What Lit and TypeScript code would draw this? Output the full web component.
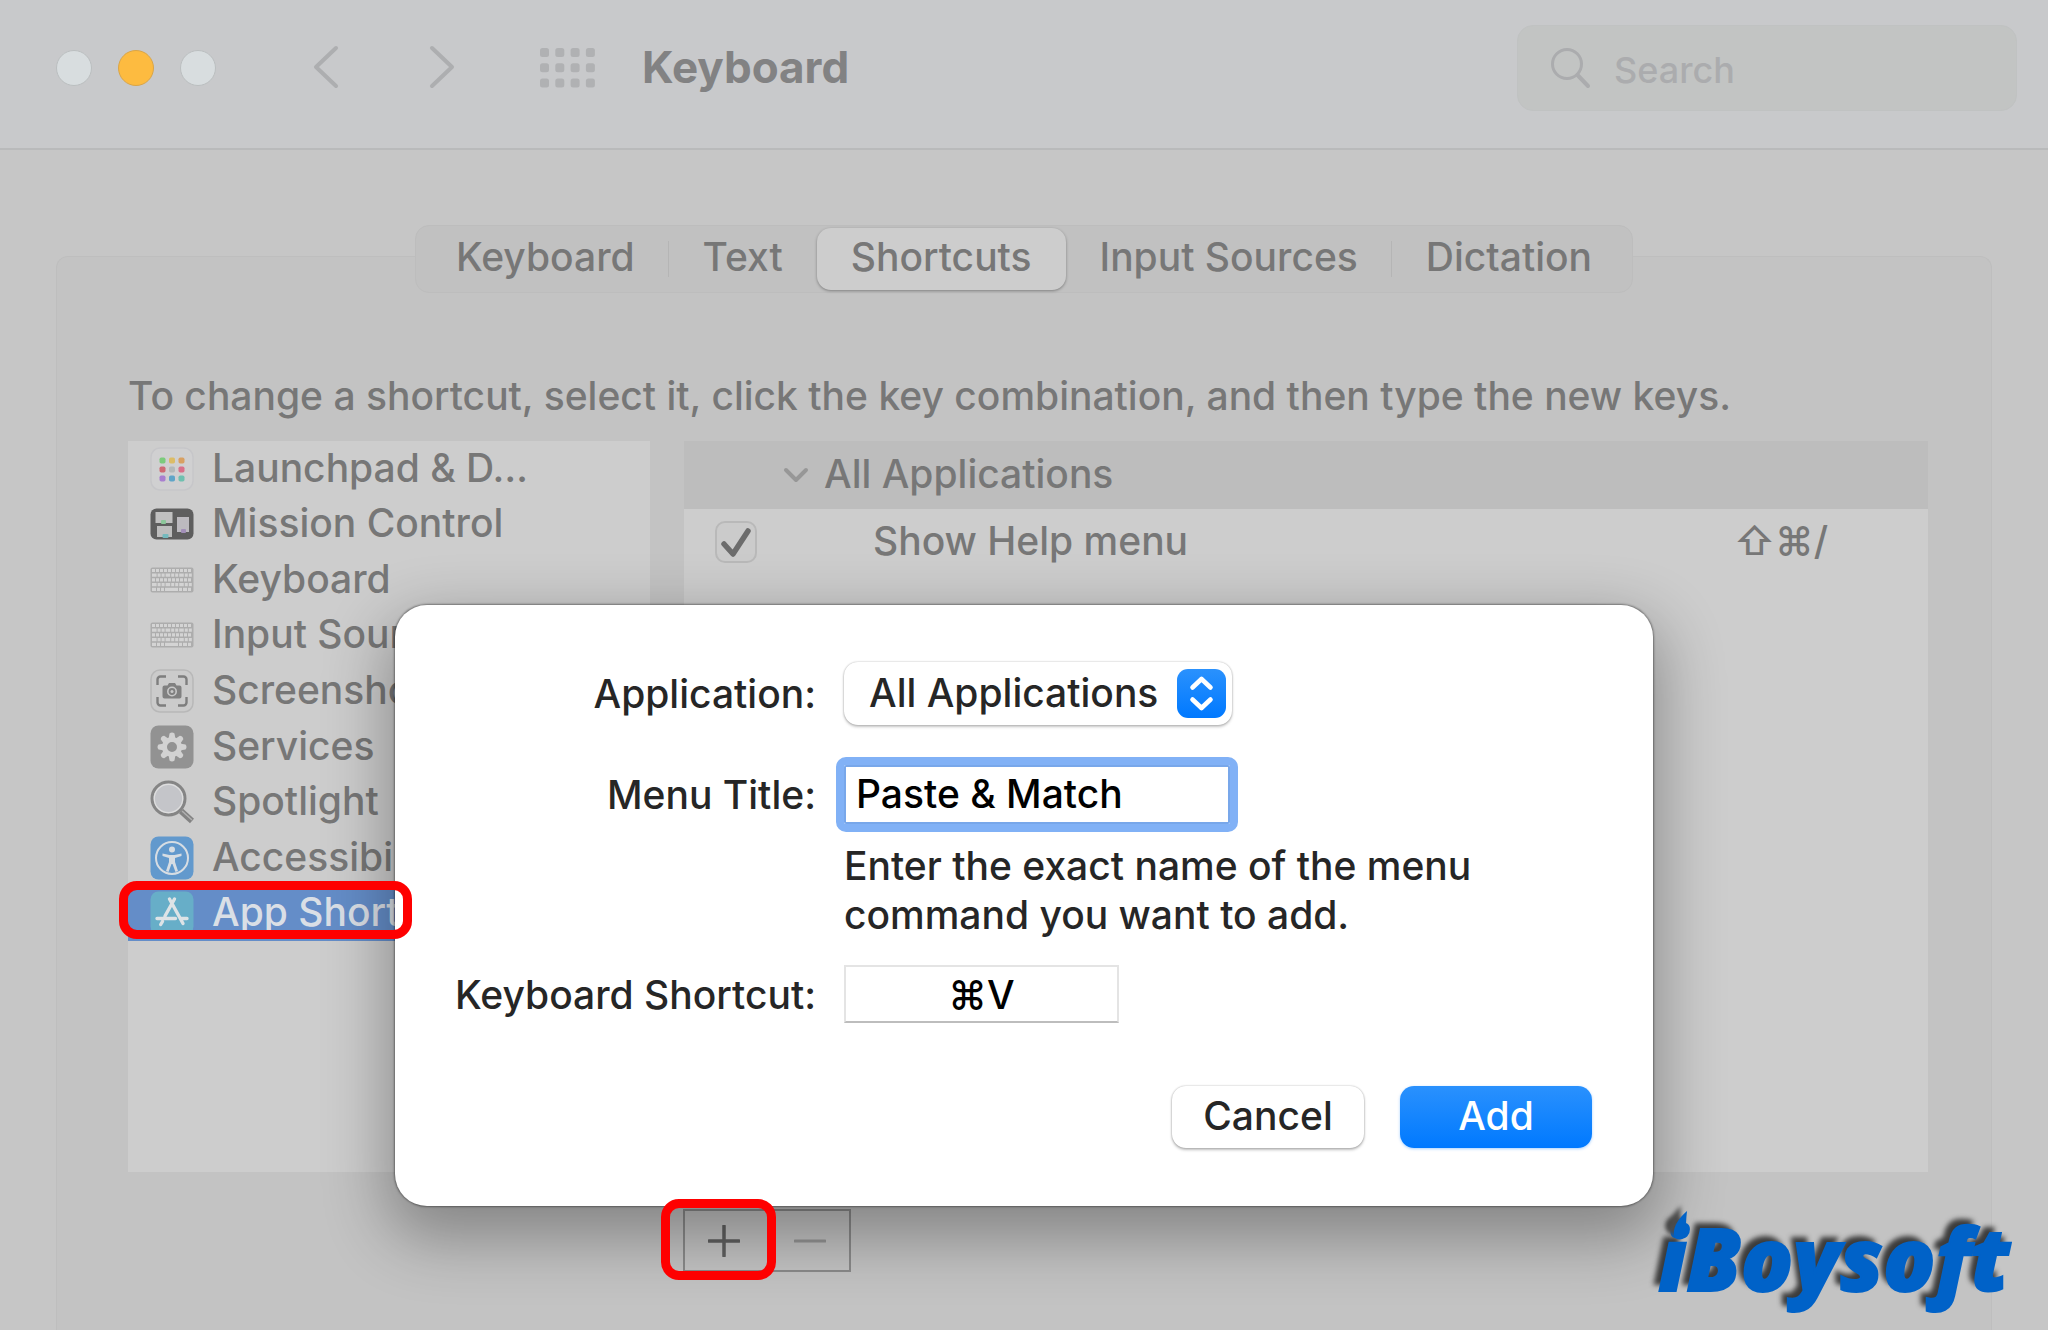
import { LitElement, html, css, svg } from "lit";
import { customElement, state } from "lit/decorators.js";
import { classMap } from "lit/directives/class-map.js";

const keyRows = [0, 1, 2, 3, 4].map((r) => {
  const y = 12.5 + r * 4.7;
  const dash = r === 4 ? "4 1 3 1 3 1 13 1 3 1" : r % 2 ? "4.6 1 3 1 3 1" : "3 1 3 1 3 1";
  return svg`<path d="M2 ${y}H42" stroke="#d4d4d4" stroke-width="3.200" stroke-dasharray=${dash}/>`;
});

const keyboardIcon = svg`
  <rect x="0.5" y="9.5" width="43" height="25" rx="2" fill="#adadad"/>
  ${keyRows}`;

const launchpadColors = ["#7ccb7c", "#dcbc66", "#d8a062", "#cf6a74", "#b4b9b9", "#d9708a", "#a97fd0", "#5fa5c8", "#6fc0b0"];

const icons: Record<string, unknown> = {
  launchpad: svg`
    <rect x="1" y="1" width="42" height="42" rx="9" fill="#d0d0d1" stroke="#c6c6c9" stroke-width="1.5"/>
    ${launchpadColors.map((c, i) => svg`<rect x=${9.5 + (i % 3) * 9.5} y=${10.5 + Math.floor(i / 3) * 9} width="6" height="6" rx="1.8" fill=${c}/>`)}`,
  mission: svg`
    <rect x="0.5" y="6.500" width="43" height="31" rx="6" fill="#5e5e5e"/>
    <rect x="5.500" y="10" width="17" height="11" fill="#c0c0c0"/>
    <rect x="7" y="24" width="15" height="11" fill="#bdbdbd"/>
    <rect x="27" y="15" width="12" height="15" fill="#bcbabf"/>
    <rect x="11" y="18" width="5" height="4" rx="1" fill="#8cc79a"/>
    <rect x="12.500" y="32" width="6" height="4" rx="1" fill="#74b9bd"/>
    <rect x="31" y="27" width="5" height="4" rx="1" fill="#a28fb8"/>`,
  keyboard: keyboardIcon,
  screenshot: svg`
    <rect x="1" y="1" width="42" height="42" rx="9" fill="#cbcbcb" stroke="#b8b8b8" stroke-width="1.5"/>
    <path d="M7.500 16V10.500a3 3 0 0 1 3-3H16M28 7.500h5.500a3 3 0 0 1 3 3V16M36.500 28v5.500a3 3 0 0 1-3 3H28M16 36.500h-5.500a3 3 0 0 1-3-3V28" fill="none" stroke="#7e7e7e" stroke-width="2.400"/>
    <path d="M14.500 16.500h3l1.500-2.500h6l1.500 2.500h3a2 2 0 0 1 2 2v9a2 2 0 0 1-2 2h-15a2 2 0 0 1-2-2v-9a2 2 0 0 1 2-2z" fill="#808080"/>
    <circle cx="22" cy="22.500" r="4.200" fill="#808080" stroke="#c8c8c8" stroke-width="1.600"/>
    <circle cx="22" cy="22.500" r="1.500" fill="#c8c8c8"/>`,
  services: svg`
    <rect x="0.500" y="0.500" width="43" height="43" rx="8" fill="#929292"/>
    ${[0, 45, 90, 135, 180, 225, 270, 315].map((a) => svg`<path d="M19.500 8.500q2.500-2 5 0l1 6h-7z" fill="#d2d2d2" transform="rotate(${a} 22 22)"/>`)}
    <circle cx="22" cy="22" r="7.500" fill="none" stroke="#d2d2d2" stroke-width="5"/>`,
  spotlight: svg`
    <path d="M31 31L42 41" stroke="#828282" stroke-width="6"/>
    <path d="M32 31L42 40" stroke="#b0b0b0" stroke-width="1.500"/>
    <circle cx="18.500" cy="18.500" r="16.500" fill="#c4c5c9" stroke="#858585" stroke-width="3"/>
    <circle cx="18.500" cy="18.500" r="14.200" fill="none" stroke="#dedede" stroke-width="1.200"/>`,
  accessibility: svg`
    <rect x="0.500" y="0.500" width="43" height="43" rx="8" fill="#6299cd"/>
    <circle cx="22" cy="22" r="16" fill="none" stroke="#d7dde3" stroke-width="2"/>
    <circle cx="22" cy="13.500" r="3" fill="#d7dde3"/>
    <path d="M12.500 17.500l7 1.500h5l7-1.500v2.500l-6.500 2v4l3 9-2.500 1-3-8h-1l-3 8-2.500-1 3-9v-4l-6.500-2z" fill="#d7dde3"/>`,
  appstore: svg`
    <rect x="0.500" y="0.500" width="43" height="43" rx="8" fill="#67aec8"/>
    <path d="M24.500 8L15 25M19.500 8l13.500 24.500M7 27.500h18.500M31.500 27.500H37M12.500 30.500l-1.800 3" fill="none" stroke="#dde3e6" stroke-width="3.400" stroke-linecap="round"/>`,
};

interface Category {
  name: string;
  icon: string;
}

const categories: Category[] = [
  { name: "Launchpad & D…", icon: "launchpad" },
  { name: "Mission Control", icon: "mission" },
  { name: "Keyboard", icon: "keyboard" },
  { name: "Input Sources", icon: "keyboard" },
  { name: "Screenshots", icon: "screenshot" },
  { name: "Services", icon: "services" },
  { name: "Spotlight", icon: "spotlight" },
  { name: "Accessibility", icon: "accessibility" },
  { name: "App Shortcuts", icon: "appstore" },
];

const tabs = ["Keyboard", "Text", "Shortcuts", "Input Sources", "Dictation"];

@customElement("prefs-toolbar")
class PrefsToolbar extends LitElement {
  static styles = css`
    :host { display: block; }
    .bar {
      box-sizing: border-box;
      height: 150px;
      padding: 0 31px 12px 56px;
      display: flex;
      align-items: center;
      background: #c8c9cb;
      border-bottom: 2px solid #b9babb;
    }
    button { border: 0; padding: 0; background: none; display: block; }
    svg { display: block; }
    .lights { display: flex; gap: 26px; margin-right: 96px; }
    .light { width: 36px; height: 36px; border-radius: 50%; background: #d8dddf; border: 1px solid #bbbfc0; }
    .minimize { background: #fdbb40; border-color: #d9a548; }
    .history { display: flex; gap: 88px; margin: 0 84px 2px 0; }
    .title { margin: 0 auto 0 46px; padding-bottom: 2px; font-size: 44px; line-height: 52px; font-weight: 650; color: #828283; }
    .search {
      box-sizing: border-box;
      width: 500px;
      height: 86px;
      padding: 2px 32px 0;
      display: flex;
      align-items: center;
      gap: 22px;
      border-radius: 16px;
      background: #c2c4c3;
      border: 1px solid #c0c2c2;
    }
    .field { flex: 1; min-width: 0; border: 0; padding: 2px 0 0; background: none; outline: 0; font: inherit; font-size: 36px; color: #7f7f80; }
    .field::placeholder { color: #abacae; opacity: 1; }
  `;

  render() {
    return html`
      <header class="bar">
        <div class="lights">
          <button class="light" aria-label="Close"></button>
          <button class="light minimize" aria-label="Minimize"></button>
          <button class="light" aria-label="Zoom"></button>
        </div>
        <div class="history">
          <button aria-label="Back">
            <svg width="28" height="46" viewBox="0 0 28 46"><path d="M24 4L4 23l20 19" fill="none" stroke="#adaeb0" stroke-width="4" stroke-linecap="round" stroke-linejoin="round"/></svg>
          </button>
          <button aria-label="Forward">
            <svg width="28" height="46" viewBox="0 0 28 46"><path d="M4 4l20 19L4 42" fill="none" stroke="#adaeb0" stroke-width="4" stroke-linecap="round" stroke-linejoin="round"/></svg>
          </button>
        </div>
        <button aria-label="Show All">
          <svg width="56" height="42" viewBox="0 0 56 42">
            ${[0, 1, 2].map((r) => [0, 1, 2, 3].map((c) => svg`<rect x=${c * 15.300} y=${1 + r * 15.300} width="9" height="9" rx="2.500" fill="#b0b1b3"/>`))}
          </svg>
        </button>
        <h1 class="title">Keyboard</h1>
        <label class="search">
          <svg width="42" height="42" viewBox="0 0 42 42"><circle cx="17" cy="16" r="14.500" fill="none" stroke="#abacae" stroke-width="3"/><path d="M27.500 27L38 38" stroke="#abacae" stroke-width="4" stroke-linecap="round"/></svg>
          <input class="field" type="text" placeholder="Search" aria-label="Search" />
        </label>
      </header>
    `;
  }
}

@customElement("shortcut-sheet")
class ShortcutSheet extends LitElement {
  static styles = css`
    :host { display: block; }
    .sheet {
      box-sizing: border-box;
      padding: 57px 61px 58px 60px;
      background: #fff;
      border-radius: 32px;
      box-shadow: 0 0 2px 1px rgba(0, 0, 0, 0.38), 0 24px 64px 8px rgba(0, 0, 0, 0.32);
      color: #262626;
      line-height: 49px;
    }
    .form { display: grid; grid-template-columns: 361px 1fr; column-gap: 28px; align-items: center; justify-items: start; }
    .label { justify-self: end; white-space: nowrap; }
    .popup { display: grid; align-items: center; width: 388px; height: 63px; margin-bottom: 40px; }
    .popup > * { grid-area: 1 / 1; }
    .first { margin-bottom: 40px; }
    .select {
      appearance: none;
      box-sizing: border-box;
      width: 100%;
      height: 100%;
      margin: 0;
      padding: 0 70px 2px 25px;
      border: 0;
      border-radius: 14px;
      background: #fff;
      box-shadow: 0 0 2px rgba(0, 0, 0, 0.3), 0 2px 3px rgba(0, 0, 0, 0.22);
      font: inherit;
      color: inherit;
    }
    .arrows { justify-self: end; margin-right: 6px; pointer-events: none; }
    .text {
      box-sizing: border-box;
      width: 386px;
      height: 59px;
      padding: 0 10px 2px;
      border: 2px solid #78a7ea;
      border-radius: 2px;
      outline: 8px solid #81b1f6;
      font: inherit;
      color: #000;
      background: #fff;
    }
    .hint { grid-column: 2; margin: 17px 0 26px; max-width: 660px; }
    .keys {
      box-sizing: border-box;
      width: 275px;
      height: 58px;
      padding: 0;
      border: 2px solid #e4e4e4;
      border-bottom-color: #bdbdbd;
      background: #fff;
      font: inherit;
      color: #000;
      text-align: center;
    }
    .actions { display: flex; justify-content: flex-end; gap: 36px; margin-top: 63px; }
    .button {
      width: 192px;
      height: 62px;
      padding: 0 0 4px;
      border: 0;
      border-radius: 14px;
      background: #fff;
      box-shadow: 0 0 2px rgba(0, 0, 0, 0.3), 0 2px 3px rgba(0, 0, 0, 0.25);
      font: inherit;
      color: inherit;
    }
    .primary { color: #fff; background: linear-gradient(#2a91fd, #0079ff); box-shadow: 0 1px 3px rgba(0, 122, 255, 0.35); }
  `;

  render() {
    return html`
      <form class="sheet" role="dialog" aria-label="Add shortcut" @submit=${(e: Event) => e.preventDefault()}>
        <div class="form">
          <label class="label first" for="application">Application:</label>
          <div class="popup">
            <select class="select" id="application"><option>All Applications</option></select>
            <svg class="arrows" width="49" height="49" viewBox="0 0 49 49">
              <defs><linearGradient id="blue" x2="0" y2="1"><stop stop-color="#2a91fd"/><stop offset="1" stop-color="#0079ff"/></linearGradient></defs>
              <rect width="49" height="49" rx="11" fill="url(#blue)"/>
              <path d="M15.500 18.500l9-8.500 9 8.500M15.500 30.500l9 8.500 9-8.500" fill="none" stroke="#fff" stroke-width="4.600" stroke-linecap="round" stroke-linejoin="round"/>
            </svg>
          </div>
          <label class="label" for="menu-title">Menu Title:</label>
          <input class="text" id="menu-title" type="text" value="Paste &amp; Match" />
          <p class="hint">Enter the exact name of the menu command you want to add.</p>
          <label class="label" for="keys">Keyboard Shortcut:</label>
          <input class="keys" id="keys" type="text" value="⌘V" />
        </div>
        <div class="actions">
          <button class="button" type="button">Cancel</button>
          <button class="button primary" type="submit">Add</button>
        </div>
      </form>
    `;
  }
}

@customElement("app-root")
class AppRoot extends LitElement {
  @state() private selected = "App Shortcuts";
  @state() private tab = "Shortcuts";

  static styles = css`
    :host {
      display: flex;
      flex-direction: column;
      position: relative;
      min-height: 100vh;
      overflow: hidden;
      background: #c6c6c6;
      color: #777;
      font-family: Inter, "Liberation Sans", sans-serif;
      font-size: 39px;
      font-weight: 450;
      line-height: 48px;
    }
    button { font: inherit; color: inherit; }
    .panel {
      flex: 1;
      box-sizing: border-box;
      margin: 106px 56px 0;
      padding: 0 63px 56px 71px;
      border: 1px solid #bebebe;
      border-bottom: 0;
      border-radius: 12px 12px 0 0;
      background: #c3c3c3;
    }
    .tabs {
      box-sizing: border-box;
      width: max-content;
      height: 68px;
      padding: 0 6px;
      margin: -32px auto 79px;
      display: flex;
      align-items: center;
      border-radius: 14px;
      border: 1px solid #bdbdbd;
      background: #c1c1c1;
    }
    .tab-row { display: flex; padding-right: 8px; }
    .tab { border: 0; height: 62px; padding: 0 34px 4px; background: none; border-radius: 14px; white-space: nowrap; }
    .active { background: #cdcdcd; box-shadow: 0 1px 3px rgba(0, 0, 0, 0.35); }
    .divided { border-radius: 0; box-shadow: -1px 0 0 #b5b5b5; height: 36px; line-height: 32px; }
    .intro { margin: 0 0 21px; white-space: nowrap; }
    .columns { display: flex; gap: 34px; height: 731px; }
    .list {
      box-sizing: border-box;
      flex: none;
      width: 522px;
      margin: 0;
      padding: 0 0 231px;
      list-style: none;
      background: #cdcdcd;
      display: grid;
      grid-template-rows: repeat(9, 1fr);
    }
    .entry {
      box-sizing: border-box;
      width: 100%;
      height: 100%;
      padding: 0 20px 2px 22px;
      border: 0;
      background: none;
      display: flex;
      align-items: center;
      gap: 18px;
      text-align: left;
      white-space: nowrap;
    }
    .entry svg { flex: none; margin-top: 2px; }
    .chosen { background: #648dc8; color: #dadfe6; }
    .pane { flex: 1; min-width: 0; background: #cdcdcd; }
    .table { width: 100%; table-layout: fixed; border-collapse: collapse; }
    .toggle-col { width: 189px; }
    .keys-col { width: 194px; }
    .group { height: 66px; padding: 0 0 2px 99px; background: #bdbdbd; text-align: left; font-weight: inherit; }
    .disclosure { display: flex; align-items: center; gap: 15px; border: 0; padding: 0; background: none; }
    .disclosure svg { margin-top: 2px; }
    .cell { height: 64px; padding: 0 0 2px; }
    .check { display: grid; width: 42px; height: 42px; margin: 2px 0 0 31px; }
    .check > * { grid-area: 1 / 1; }
    .box { appearance: none; margin: 0; box-sizing: border-box; border: 2px solid #b9b9b9; border-radius: 10px; background: #cbcbcb; }
    .tick { pointer-events: none; visibility: hidden; }
    .box:checked + .tick { visibility: visible; }
    .edit { display: flex; gap: 8px; width: 168px; margin: 37px 0 0 555px; border: 2px solid #8a8a8a; box-sizing: border-box; }
    .edit button { flex: 1; height: 59px; padding: 0; border: 0; background: none; display: grid; place-items: center; }
    .sheet { position: absolute; top: 605px; left: 50%; width: 1258px; margin-left: -629px; }
    .mark { position: absolute; box-sizing: border-box; border: 9px solid #fe0000; border-radius: 18px; pointer-events: none; }
    .mark-entry { left: 119px; top: 881px; width: 293px; height: 58px; }
    .mark-add { left: 661px; top: 1199px; width: 115px; height: 81px; }
    .brand {
      position: absolute;
      right: 38px;
      bottom: 22px;
      color: #0062c8;
      font-family: "Open Sans", Lato, sans-serif;
      font-size: 86px;
      line-height: 100px;
      font-weight: 800;
      font-style: italic;
      -webkit-text-stroke: 2px #0062c8;
      text-shadow: -6px -6px 5px #3c3c3c;
    }
    .flame { position: absolute; left: 11px; top: 2px; filter: drop-shadow(-6px -5px 2px #4c4c4c); }
  `;

  private divided(i: number) {
    return i > 0 && tabs[i] !== this.tab && tabs[i - 1] !== this.tab;
  }

  render() {
    return html`
      <prefs-toolbar></prefs-toolbar>
      <main class="panel">
        <div class="tab-row">
          <div class="tabs" role="tablist">
            ${tabs.map((t, i) => html`
              <button
                role="tab"
                aria-selected=${t === this.tab}
                class=${classMap({ tab: true, active: t === this.tab, divided: this.divided(i) })}
                @click=${() => (this.tab = t)}
              >${t}</button>`)}
          </div>
        </div>
        <p class="intro">To change a shortcut, select it, click the key combination, and then type the new keys.</p>
        <div class="columns">
          <ul class="list">
            ${categories.map((c) => html`
              <li>
                <button class=${classMap({ entry: true, chosen: c.name === this.selected })} @click=${() => (this.selected = c.name)}>
                  <svg width="44" height="44" viewBox="0 0 44 44">${icons[c.icon]}</svg>
                  <span>${c.name}</span>
                </button>
              </li>`)}
          </ul>
          <div class="pane">
            <table class="table">
              <colgroup><col class="toggle-col" /><col /><col class="keys-col" /></colgroup>
              <thead>
                <tr>
                  <th class="group" colspan="3">
                    <button class="disclosure">
                      <svg width="26" height="18" viewBox="0 0 26 18"><path d="M3 4l10 10L23 4" fill="none" stroke="#979797" stroke-width="4" stroke-linecap="round" stroke-linejoin="round"/></svg>
                      All Applications
                    </button>
                  </th>
                </tr>
              </thead>
              <tbody>
                <tr>
                  <td class="cell">
                    <label class="check">
                      <input class="box" type="checkbox" checked aria-label="Show Help menu" />
                      <svg class="tick" width="42" height="42" viewBox="0 0 42 42"><path d="M9 23l9 10L33 10" fill="none" stroke="#6c6c6c" stroke-width="5.500" stroke-linecap="round" stroke-linejoin="round"/></svg>
                    </label>
                  </td>
                  <td class="cell">Show Help menu</td>
                  <td class="cell">⇧⌘/</td>
                </tr>
              </tbody>
            </table>
          </div>
        </div>
        <div class="edit">
          <button aria-label="Add"><svg width="32" height="32" viewBox="0 0 32 32"><path d="M16 1v30M1 16h30" stroke="#606060" stroke-width="3.500" stroke-linecap="round"/></svg></button>
          <button aria-label="Remove"><svg width="32" height="32" viewBox="0 0 32 32"><path d="M1 16h30" stroke="#959595" stroke-width="3" stroke-linecap="round"/></svg></button>
        </div>
      </main>
      <shortcut-sheet class="sheet"></shortcut-sheet>
      <div class="mark mark-entry"></div>
      <div class="mark mark-add"></div>
      <div class="brand">
        <svg class="flame" width="20" height="32" viewBox="0 0 20 32"><path d="M17 1C8 9 3 17 4 25c1 6 10 6 11 0C16 17 16 9 17 1z" fill="#0062c8"/></svg>iBoysoft
      </div>
    `;
  }
}
